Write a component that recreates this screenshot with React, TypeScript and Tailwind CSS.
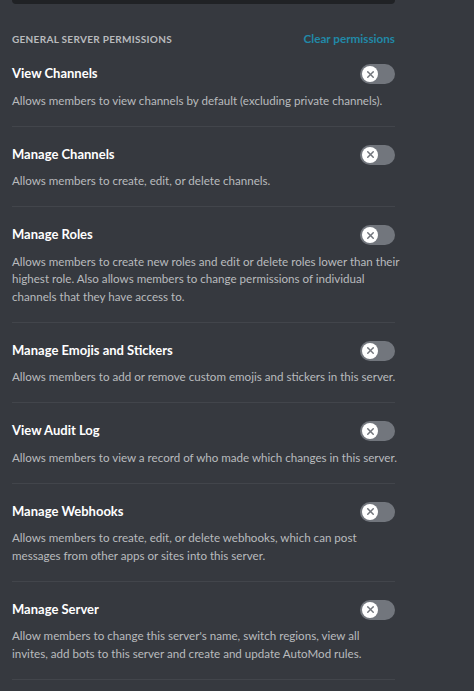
import {X} from "lucide-react";

const permissions = [
    {
        title: "View Channels",
        lines: ["Allows members to view channels by default (excluding private channels)."],
    },
    {
        title: "Manage Channels",
        lines: ["Allows members to create, edit, or delete channels."],
    },
    {
        title: "Manage Roles",
        lines: [
            "Allows members to create new roles and edit or delete roles lower than their",
            "highest role. Also allows members to change permissions of individual",
            "channels that they have access to.",
        ],
    },
    {
        title: "Manage Emojis and Stickers",
        lines: ["Allows members to add or remove custom emojis and stickers in this server."],
    },
    {
        title: "View Audit Log",
        lines: ["Allows members to view a record of who made which changes in this server."],
    },
    {
        title: "Manage Webhooks",
        lines: [
            "Allows members to create, edit, or delete webhooks, which can post",
            "messages from other apps or sites into this server.",
        ],
    },
    {
        title: "Manage Server",
        lines: [
            "Allow members to change this server's name, switch regions, view all",
            "invites, add bots to this server and create and update AutoMod rules.",
        ],
    },
]

export default function App() {

    return (
        <div className={"h-[691px] w-full bg-[#36393f] font-['Lato',sans-serif] overflow-hidden"}>
            <div className={"w-[383px] ml-[12px]"}>
                <div className={"h-[4px] bg-[#202225] rounded-b-[4px]"}/>
                <HeaderSection/>
                <div>
                    {permissions.map((p) => (
                        <PermissionRow key={p.title} title={p.title} lines={p.lines}/>
                    ))}
                </div>
            </div>
        </div>
    )
}

const HeaderSection = () => {

    return (
        <div className={"flex justify-between items-center mt-[27px] h-[16px]"}>
            <div className="text-[#b9bbbe] text-[10px] font-bold uppercase tracking-[0.03em]">
                General server permissions
            </div>
            <div className="text-[#2189a8] text-[11.7px] font-bold">Clear permissions</div>
        </div>
    )
}

const PermissionRow = ({title, lines}: { title: string, lines: string[] }) => {

    return (
        <div className={"pt-[18px] pb-[16.5px] border-b border-[#42454b] first:pt-[17px]"}>
            <div className={"flex justify-between items-center h-[20px]"}>
                <div className="text-white text-[13px] font-bold">{title}</div>
                <Toggle/>
            </div>
            <div className="mt-[7.5px] text-[#b9bbbe] text-[11.6px] leading-[17.5px] whitespace-nowrap">
                {lines.map((l) => (
                    <div key={l}>{l}</div>
                ))}
            </div>
        </div>
    )
}

const Toggle = () => {

    return (
        <div className={"w-[35px] h-[20px] rounded-full bg-[#72767d] flex items-center px-[2px]"}>
            <div className={"w-[16px] h-[16px] rounded-full bg-white flex items-center justify-center"}>
                <X size={11} strokeWidth={3.2} color={"#72767d"}/>
            </div>
        </div>
    )
}
